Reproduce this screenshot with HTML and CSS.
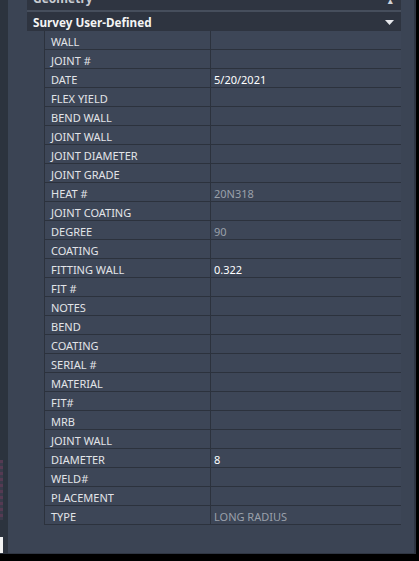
FILE: index.html
```html
<!DOCTYPE html>
<html>
<head>
<meta charset="utf-8">
<link rel="stylesheet" href="styles.css">
</head>
<body>
<div class="window">
  <div class="strip">
    <div class="marks"></div>
    <div class="whitebox"></div>
  </div>
  <div class="panel">
    <div class="content">
      <div class="geo"><span class="geo-text">Geometry</span><span class="geo-icon">&#9652;</span></div>
      <div class="sep"></div>
      <div class="hdr"><span>Survey User-Defined</span>
        <svg class="tri" width="9" height="5" viewBox="0 0 9 5"><path d="M0 0 H9 L4.5 5 Z" fill="#e6e8ec"/></svg>
      </div>
      <div class="table">
        <div class="lab">WALL</div><div class="val"></div>
        <div class="lab">JOINT #</div><div class="val"></div>
        <div class="lab">DATE</div><div class="val bright">5/20/2021</div>
        <div class="lab">FLEX YIELD</div><div class="val"></div>
        <div class="lab">BEND WALL</div><div class="val"></div>
        <div class="lab">JOINT WALL</div><div class="val"></div>
        <div class="lab">JOINT DIAMETER</div><div class="val"></div>
        <div class="lab">JOINT GRADE</div><div class="val"></div>
        <div class="lab">HEAT #</div><div class="val dim">20N318</div>
        <div class="lab">JOINT COATING</div><div class="val"></div>
        <div class="lab">DEGREE</div><div class="val dim">90</div>
        <div class="lab">COATING</div><div class="val"></div>
        <div class="lab">FITTING WALL</div><div class="val bright">0.322</div>
        <div class="lab">FIT #</div><div class="val"></div>
        <div class="lab">NOTES</div><div class="val"></div>
        <div class="lab">BEND</div><div class="val"></div>
        <div class="lab">COATING</div><div class="val"></div>
        <div class="lab">SERIAL #</div><div class="val"></div>
        <div class="lab">MATERIAL</div><div class="val"></div>
        <div class="lab">FIT#</div><div class="val"></div>
        <div class="lab">MRB</div><div class="val"></div>
        <div class="lab">JOINT WALL</div><div class="val"></div>
        <div class="lab">DIAMETER</div><div class="val bright">8</div>
        <div class="lab">WELD#</div><div class="val"></div>
        <div class="lab">PLACEMENT</div><div class="val"></div>
        <div class="lab">TYPE</div><div class="val dim">LONG RADIUS</div>
      </div>
    </div>
  </div>
</div>
</body>
</html>
```
FILE: styles.css
```css
html, body {
  margin: 0;
  padding: 0;
  background: #000;
  width: 419px;
  height: 561px;
  overflow: hidden;
}
.window {
  display: flex;
  width: 416px;
  height: 554px;
}
.strip {
  width: 8px;
  background: #2c333e;
  display: flex;
  flex-direction: column;
  justify-content: flex-end;
}
.marks {
  width: 3px;
  height: 60px;
  margin-bottom: 17px;
  background: repeating-linear-gradient(to bottom, #553a52 0 3px, #3a3a4a 3px 6px);
}
.whitebox {
  width: 3px;
  height: 16px;
  margin-bottom: 1px;
  background: #f2f2f2;
}
.panel {
  flex: 1;
  background: #3b4454;
  border-right: 2px solid #2f3643;
  border-bottom: 1px solid #2f3643;
}
.content {
  margin-left: 19px;
  width: 374px;
}
.geo {
  height: 10px;
  background: #2f3541;
  overflow: hidden;
  display: flex;
  justify-content: space-between;
  padding: 0 6px;
  font-family: "Noto Sans", sans-serif;
  font-weight: bold;
  font-size: 12px;
  color: #c8ccd2;
}
.geo-text {
  line-height: 12px;
  margin-top: -7px;
}
.geo-icon {
  font-size: 9px;
  line-height: 9px;
  margin-top: -4px;
  margin-right: 2px;
  color: #cfd2d8;
}
.sep {
  height: 2px;
  background: #464e5c;
}
.hdr {
  height: 19px;
  box-sizing: border-box;
  padding: 1px 7px 0 6px;
  background: #2e3440;
  display: flex;
  align-items: center;
  justify-content: space-between;
  font-family: "Noto Sans", sans-serif;
  font-weight: bold;
  font-size: 11.7px;
  color: #f4f4f4;
}
.table {
  margin-left: 17px;
  width: 356px;
  display: grid;
  grid-template-columns: 166px 190px;
  grid-auto-rows: 19px;
  border-left: 1px solid #2c323d;
  border-right: 1px solid #2c323d;
  box-sizing: border-box;
  font-family: "Noto Sans", sans-serif;
  font-size: 11px;
}
.lab, .val {
  border-bottom: 1px solid #2c323d;
  box-sizing: border-box;
  line-height: 21px;
  white-space: nowrap;
  background: #3d4657;
}
.lab {
  padding-left: 6px;
  color: #e2e4e8;
  border-right: 1px solid #2c323d;
}
.val {
  padding-left: 3px;
}
.bright { color: #ffffff; }
.dim { color: #9aa0aa; }
```
